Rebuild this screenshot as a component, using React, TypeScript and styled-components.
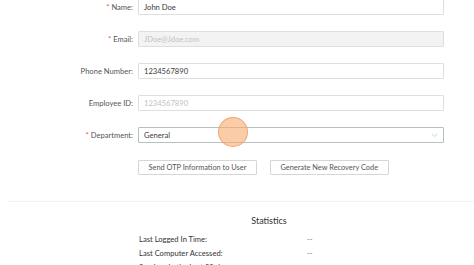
import React, { FC } from 'react';
import styled, { createGlobalStyle } from 'styled-components';

const GlobalStyle = createGlobalStyle`
  html, body {
    margin: 0;
    padding: 0;
    background: #ffffff;
    overflow: hidden;
  }
  body {
    font-family: Lato, 'Open Sans', sans-serif;
    color: #333333;
  }
`;

interface FieldType {
  label: string;
  value: string;
  required?: boolean;
  disabled?: boolean;
  placeholder?: boolean;
}

const fields: FieldType[] = [
  { label: 'Name:', value: 'John Doe', required: true },
  { label: 'Email:', value: 'JDoe@Jdoe.com', required: true, disabled: true },
  { label: 'Phone Number:', value: '1234567890' },
  { label: 'Employee ID:', value: '1234567890', placeholder: true },
];

const stats = [
  { label: 'Last Logged In Time:', value: '--' },
  { label: 'Last Computer Accessed:', value: '--' },
  { label: 'Services in the Last 30 days:', value: '--' },
];

const App: FC = () => {
  return (
    <Page>
      <GlobalStyle />
      <Form>
        {fields.map(f => (
          <Row key={f.label}>
            <Label>
              {f.required && <Star>*</Star>}
              {f.label}
            </Label>
            <Input disabled={f.disabled} muted={f.placeholder}>
              {f.value}
            </Input>
          </Row>
        ))}
        <Row>
          <Label>
            <Star>*</Star>
            Department:
          </Label>
          <Select>
            <span>General</span>
            <svg width="7" height="5" viewBox="0 0 7 5" aria-hidden="true">
              <path d="M0.8 1l2.7 2.6L6.2 1" fill="none" stroke="#c4c4c4" strokeWidth="0.8" />
            </svg>
          </Select>
        </Row>
        <Actions>
          <Button>Send OTP Information to User</Button>
          <Button>Generate New Recovery Code</Button>
        </Actions>
      </Form>
      <Divider />
      <Stats>
        <StatsTitle>Statistics</StatsTitle>
        {stats.map(s => (
          <StatRow key={s.label}>
            <span>{s.label}</span>
            <StatValue>{s.value}</StatValue>
          </StatRow>
        ))}
      </Stats>
      <Cursor />
    </Page>
  );
};

export default App;

const Page = styled.div`
  position: relative;
  width: 474px;
  height: 265px;
  overflow: hidden;
  font-size: 7.6px;
`;

const Form = styled.div`
  display: flex;
  flex-direction: column;
  gap: 16px;
  margin-top: -1px;
`;

const Row = styled.div`
  display: grid;
  grid-template-columns: 133px 306px;
  column-gap: 5px;
  align-items: center;
  height: 16px;
`;

const Label = styled.label`
  text-align: right;
  color: #555555;
  white-space: nowrap;
`;

const Star = styled.span`
  color: #e8584f;
  margin-right: 2px;
`;

const Input = styled.div<{ disabled?: boolean; muted?: boolean }>`
  box-sizing: border-box;
  height: 16px;
  display: flex;
  align-items: center;
  padding: 0 5px;
  border: 1px solid #dedede;
  border-radius: 1px;
  background: ${({ disabled }) => (disabled ? '#f3f3f3' : '#ffffff')};
  color: ${({ disabled, muted }) => (disabled || muted ? '#c2c2c2' : '#3a3a3a')};
`;

const Select = styled.div`
  box-sizing: border-box;
  height: 16px;
  display: flex;
  align-items: center;
  justify-content: space-between;
  padding: 0 5px;
  border: 1px solid #b4c2bf;
  border-radius: 1px;
  color: #3a3a3a;
`;

const Actions = styled.div`
  display: flex;
  gap: 13px;
  margin-left: 138px;
  margin-top: 1px;
`;

const Button = styled.button`
  box-sizing: border-box;
  height: 15px;
  padding: 0 9.5px;
  font-family: inherit;
  font-size: 7.4px;
  color: #555555;
  background: #ffffff;
  border: 1px solid #d6d6d6;
  border-radius: 1px;
`;

const Divider = styled.div`
  height: 1px;
  background: #f1f1f1;
  margin: 26px 0 0 8px;
`;

const Stats = styled.div`
  width: 260px;
  margin: 12px 0 0 139px;
  color: #333333;
`;

const StatsTitle = styled.div`
  text-align: center;
  font-size: 9px;
  line-height: 14px;
  margin-bottom: 4px;
`;

const StatRow = styled.div`
  display: grid;
  grid-template-columns: 168px auto;
  line-height: 14px;
  white-space: nowrap;
`;

const StatValue = styled.span`
  color: #777777;
`;

const Cursor = styled.div`
  position: absolute;
  left: 218px;
  top: 117px;
  width: 30px;
  height: 30px;
  box-sizing: border-box;
  border-radius: 50%;
  background: rgba(247, 170, 110, 0.6);
  border: 1px solid rgba(238, 150, 90, 0.7);
`;
